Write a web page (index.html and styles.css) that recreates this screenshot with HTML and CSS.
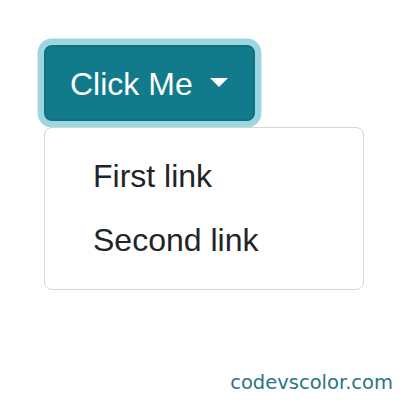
FILE: index.html
```html
<!DOCTYPE html>
<html>
<head>
<meta charset="utf-8">
<link rel="stylesheet" href="styles.css">
</head>
<body>
<div class="page">
  <div class="dropdown">
    <button class="btn"><span class="label">Click Me</span><span class="caret"></span></button>
    <div class="menu">
      <a class="item">First link</a>
      <a class="item">Second link</a>
    </div>
  </div>
  <div class="watermark">codevscolor.com</div>
</div>
</body>
</html>
```
FILE: styles.css
```css
html, body {
  margin: 0;
  padding: 0;
  background: #fff;
}
.page {
  width: 408px;
  height: 404px;
  box-sizing: border-box;
  padding: 45px 0 0 44px;
  display: flex;
  flex-direction: column;
  font-family: "Liberation Sans", Arial, sans-serif;
}
.dropdown {
  display: flex;
  flex-direction: column;
  align-items: flex-start;
}
.btn {
  font-family: "Liberation Sans", Arial, sans-serif;
  font-size: 32px;
  line-height: 48px;
  color: #fff;
  background: #117a8b;
  border: 2px solid #10707f;
  border-radius: 8px;
  padding: 13px 25px 11px 24px;
  margin: 0;
  box-shadow: 0 0 0 6.4px rgba(58, 176, 195, 0.5);
  display: flex;
  align-items: baseline;
  cursor: pointer;
}
.caret {
  display: inline-block;
  width: 0;
  height: 0;
  margin-left: 17px;
  border-top: 9.6px solid #fff;
  border-left: 9.6px solid transparent;
  border-right: 9.6px solid transparent;
  position: relative;
  top: -8px;
}
.menu {
  margin-top: 6px;
  width: 320px;
  box-sizing: border-box;
  border: 1px solid #d5d5d5;
  border-radius: 8px;
  padding: 16px 0 17px;
  background: #fff;
}
.item {
  display: block;
  padding: 8px 48px;
  font-size: 32px;
  line-height: 48px;
  color: #212529;
}
.watermark {
  margin-top: 81px;
  align-self: flex-end;
  padding-right: 15px;
  font-family: "DejaVu Sans", sans-serif;
  font-size: 19.5px;
  line-height: 24px;
  color: #2b7585;
}
```
